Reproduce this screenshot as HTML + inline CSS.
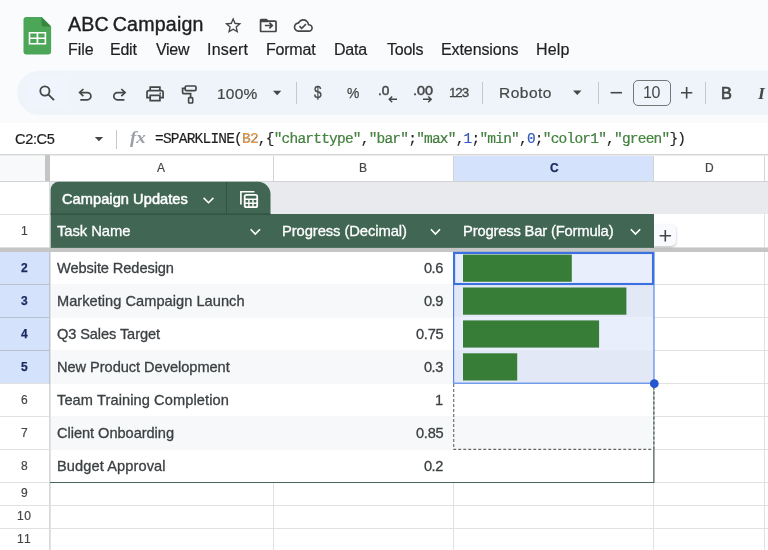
<!DOCTYPE html>
<html lang="en">
<head>
<meta charset="utf-8">
<title>ABC Campaign - Sheets</title>
<style>
*{box-sizing:border-box;margin:0;padding:0}
html,body{width:768px;height:550px;overflow:hidden;background:#f9fbfd;font-family:"Liberation Sans",sans-serif;color:#1f1f1f}
#app{position:relative;width:768px;height:550px;overflow:hidden;will-change:transform}
.b{position:absolute;display:block}
.t{position:absolute;white-space:nowrap;line-height:1}
</style>
</head>
<body>
<div id="app">
<!-- backgrounds, grid and selection -->
<svg class="b" style="left:0;top:66px" width="768" height="54" viewBox="0 66 768 54"><rect x="17.3" y="70.7" width="800" height="44.1" rx="22" fill="#eff3fa"/><rect x="27.4" y="77.2" width="40.3" height="31.1" rx="4.5" fill="#f0f4fc"/></svg>
<div class="b" style="left:296px;top:82px;width:1px;height:22px;background:#c7c7c7"></div>
<div class="b" style="left:482px;top:82px;width:1px;height:22px;background:#c7c7c7"></div>
<div class="b" style="left:598px;top:82px;width:1px;height:22px;background:#c7c7c7"></div>
<div class="b" style="left:705px;top:82px;width:1px;height:22px;background:#c7c7c7"></div>
<div class="b" style="left:633px;top:80px;width:38px;height:26px;background:transparent;border:1px solid #747775;border-radius:5px"></div>
<div class="b" style="left:0px;top:123px;width:768px;height:31px;background:#fff"></div>
<div class="b" style="left:0px;top:154px;width:768px;height:1px;background:#d6d6d6"></div>
<div class="b" style="left:0px;top:155px;width:768px;height:1px;background:#ebebeb"></div>
<div class="b" style="left:116px;top:130px;width:1px;height:19px;background:#c7c7c7"></div>
<div class="b" style="left:0px;top:156px;width:768px;height:394px;background:#fff"></div>
<div class="b" style="left:0px;top:156px;width:45px;height:25px;background:#f8f9fa"></div>
<div class="b" style="left:45px;top:155px;width:5px;height:26px;background:#c5c5c5"></div>
<div class="b" style="left:454px;top:156px;width:199px;height:25px;background:#d5e2fb"></div>
<div class="b" style="left:0px;top:181px;width:768px;height:1px;background:#d3d3d3"></div>
<div class="b" style="left:273px;top:156px;width:1px;height:25px;background:#d3d3d3"></div>
<div class="b" style="left:453px;top:156px;width:1px;height:25px;background:#d3d3d3"></div>
<div class="b" style="left:653px;top:156px;width:1px;height:25px;background:#d3d3d3"></div>
<div class="b" style="left:764px;top:156px;width:1px;height:25px;background:#d3d3d3"></div>
<div class="b" style="left:50px;top:182px;width:718px;height:32px;background:#e8eaed"></div>
<div class="b" style="left:49px;top:182px;width:1px;height:32px;background:#dcdcdc"></div>
<svg class="b" style="left:48px;top:180px" width="226" height="36" viewBox="48 180 226 36"><path d="M50.6 215V189.8a8 8 0 0 1 8-8H258a12.5 12.5 0 0 1 12.5 12.5V215Z" fill="#416754"/></svg>
<div class="b" style="left:226px;top:182px;width:1px;height:32px;background:#335443"></div>
<div class="b" style="left:0px;top:214px;width:49px;height:1px;background:#e1e1e1"></div>
<div class="b" style="left:0px;top:247px;width:768px;height:5px;background:#c5c5c5"></div>
<div class="b" style="left:0px;top:247px;width:768px;height:1px;background:#dedede"></div>
<svg class="b" style="left:48px;top:212px" width="610" height="38" viewBox="48 212 610 38"><rect x="50.6" y="214" width="603.4" height="33.9" fill="#416754"/><rect x="50.6" y="213.6" width="219.9" height="1" fill="#2c4a3a"/></svg>
<div class="b" style="left:49px;top:215px;width:1px;height:32px;background:#e1e1e1"></div>
<div class="b" style="left:654px;top:224.6px;width:21.6px;height:21.8px;background:#f8fafd;border-radius:0 5px 5px 0;box-shadow:0 1px 2.5px rgba(60,64,67,.35)"></div>
<svg class="b" style="left:657px;top:227px" width="17" height="17" viewBox="657 227 17 17"><path d="M665.3 230V241.4M659.6 235.7H671" stroke="#444746" stroke-width="1.6" fill="none"/></svg>
<div class="b" style="left:0px;top:252px;width:49px;height:32px;background:#d5e2fb"></div>
<div class="b" style="left:0px;top:284px;width:49px;height:33px;background:#d5e2fb"></div>
<div class="b" style="left:51px;top:284px;width:601px;height:34px;background:#f6f8f9"></div>
<div class="b" style="left:0px;top:317px;width:49px;height:33px;background:#d5e2fb"></div>
<div class="b" style="left:0px;top:350px;width:49px;height:33px;background:#d5e2fb"></div>
<div class="b" style="left:51px;top:350px;width:601px;height:34px;background:#f6f8f9"></div>
<div class="b" style="left:0px;top:383px;width:49px;height:33px;background:#fff"></div>
<div class="b" style="left:0px;top:416px;width:49px;height:33px;background:#fff"></div>
<div class="b" style="left:51px;top:416px;width:601px;height:34px;background:#f6f8f9"></div>
<div class="b" style="left:0px;top:449px;width:49px;height:33px;background:#fff"></div>
<div class="b" style="left:0px;top:284px;width:49px;height:1px;background:#b9c1ce"></div>
<div class="b" style="left:654px;top:284px;width:114px;height:1px;background:#e1e1e1"></div>
<div class="b" style="left:0px;top:317px;width:49px;height:1px;background:#b9c1ce"></div>
<div class="b" style="left:654px;top:317px;width:114px;height:1px;background:#e1e1e1"></div>
<div class="b" style="left:0px;top:350px;width:49px;height:1px;background:#b9c1ce"></div>
<div class="b" style="left:654px;top:350px;width:114px;height:1px;background:#e1e1e1"></div>
<div class="b" style="left:0px;top:383px;width:49px;height:1px;background:#e1e1e1"></div>
<div class="b" style="left:654px;top:383px;width:114px;height:1px;background:#e1e1e1"></div>
<div class="b" style="left:0px;top:416px;width:49px;height:1px;background:#e1e1e1"></div>
<div class="b" style="left:654px;top:416px;width:114px;height:1px;background:#e1e1e1"></div>
<div class="b" style="left:0px;top:449px;width:49px;height:1px;background:#e1e1e1"></div>
<div class="b" style="left:654px;top:449px;width:114px;height:1px;background:#e1e1e1"></div>
<div class="b" style="left:0px;top:482px;width:49px;height:1px;background:#e1e1e1"></div>
<div class="b" style="left:654px;top:482px;width:114px;height:1px;background:#e1e1e1"></div>
<div class="b" style="left:49px;top:252px;width:1px;height:298px;background:#d9d9d9"></div>
<div class="b" style="left:49px;top:252px;width:1px;height:132px;background:#bec5d1"></div>
<div class="b" style="left:50px;top:252px;width:1px;height:298px;background:#e2e2e2"></div>
<div class="b" style="left:0px;top:505px;width:768px;height:1px;background:#e1e1e1"></div>
<div class="b" style="left:0px;top:528px;width:768px;height:1px;background:#e1e1e1"></div>
<div class="b" style="left:0px;top:482px;width:49px;height:1px;background:#e1e1e1"></div>
<div class="b" style="left:273px;top:483px;width:1px;height:70px;background:#e1e1e1"></div>
<div class="b" style="left:453px;top:483px;width:1px;height:70px;background:#e1e1e1"></div>
<div class="b" style="left:653px;top:252px;width:1px;height:300px;background:#e1e1e1"></div>
<div class="b" style="left:764px;top:252px;width:1px;height:300px;background:#e1e1e1"></div>
<div class="b" style="left:764px;top:214px;width:1px;height:33px;background:#e1e1e1"></div>
<svg class="b" style="left:440px;top:246px" width="230" height="244" viewBox="440 246 230 244"><rect x="453.5" y="252" width="200.5" height="32.3" fill="#e9eefc"/><rect x="453.5" y="284.3" width="200.5" height="33.0" fill="#e2e8f5"/><rect x="453.5" y="317.3" width="200.5" height="33.0" fill="#e9eefc"/><rect x="453.5" y="350.3" width="200.5" height="33.0" fill="#e2e8f5"/><rect x="463" y="254.6" width="108.8" height="27.2" fill="#377d37"/><rect x="463" y="287.5" width="163.4" height="27.2" fill="#377d37"/><rect x="463" y="320.4" width="136.1" height="27.2" fill="#377d37"/><rect x="463" y="353.3" width="54.2" height="27.2" fill="#377d37"/><path d="M653.9 449.5V482.8" stroke="#35503f" stroke-width="1.1" fill="none"/><path d="M653.9 388V449.5" stroke="#a3b0a8" stroke-width="1.1" fill="none"/><path d="M453.7 384V449.4H653.3" fill="none" stroke="#666" stroke-width="1.1" stroke-dasharray="2.9 2.1"/><path d="M653.9 449.4V384" fill="none" stroke="#3f5247" stroke-width="1.1" stroke-dasharray="2.9 2.1"/><rect x="453.6" y="252.4" width="200.4" height="130.8" fill="none" stroke="#4a80e8" stroke-width="1.1"/><rect x="454.1" y="253" width="198.9" height="31" fill="none" stroke="#3b70e0" stroke-width="2.1"/><circle cx="654.3" cy="383.7" r="4.4" fill="#2456cf"/></svg>
<div class="b" style="left:50px;top:482px;width:604px;height:1px;background:#4a6656"></div>
<!-- icons -->
<svg class="b" style="left:23px;top:16px" width="29" height="40" viewBox="0 0 29 40"><path d="M3.4 0.9H18.6L28.1 10.6V35.6a2.9 2.9 0 0 1-2.9 2.9H3.4a2.9 2.9 0 0 1-2.9-2.9V3.8a2.9 2.9 0 0 1 2.9-2.9Z" fill="#4ba658"/><path d="M18.6 0.9L28.1 10.6H20.8a2.2 2.2 0 0 1-2.2-2.2Z" fill="#37863f"/><path d="M5.7 15.9H23.2V28.6H5.7ZM7.3 17.6V21.4H13.6V17.6ZM15.3 17.6V21.4H21.6V17.6ZM7.3 23.1V26.9H13.6V23.1ZM15.3 23.1V26.9H21.6V23.1Z" fill="#fff" fill-rule="evenodd"/></svg>
<svg class="b" style="left:223px;top:15px" width="24" height="24" viewBox="-0.24 -0.84 28.94 28.94"><path fill="#444746" d="M22 9.24l-7.19-.62L12 2 9.19 8.63 2 9.24l5.46 4.73L5.82 21 12 17.27 18.18 21l-1.63-7.03L22 9.24zM12 15.4l-3.76 2.27 1-4.28-3.32-2.88 4.38-.38L12 6.1l1.71 4.04 4.38.38-3.32 2.88 1 4.28L12 15.4z"/></svg>
<svg class="b" style="left:258px;top:15px" width="24" height="24" viewBox="0 -0.233 27.96 27.96"><path fill="#444746" d="M20 6h-8l-2-2H4c-1.1 0-2 .9-2 2v12c0 1.1.9 2 2 2h16c1.1 0 2-.9 2-2V8c0-1.1-.9-2-2-2zm0 12H4V6h5.17l2 2H20v10zm-7.41-3.41L14 16l4-4-4-4-1.41 1.41L14.17 11H8v2h6.17l-1.58 1.59z"/><path fill="#444746" d="M2.6 8.2V5.6a1.2 1.2 0 0 1 1.2-1.2h5.9l2.6 2.6v1.2z"/></svg>
<svg class="b" style="left:293px;top:15px" width="24" height="24" viewBox="-0.875 -1.125 30 30"><path fill="#444746" d="M19.35 10.04C18.67 6.59 15.64 4 12 4 9.11 4 6.6 5.64 5.35 8.04 2.34 8.36 0 10.91 0 14c0 3.31 2.69 6 6 6h13c2.76 0 5-2.24 5-5 0-2.64-2.05-4.78-4.65-4.96zM19 18H6c-2.21 0-4-1.79-4-4 0-2.05 1.53-3.76 3.56-3.97l1.07-.11.5-.95C8.08 7.14 9.94 6 12 6c2.62 0 4.88 1.86 5.39 4.43l.3 1.5 1.53.11c1.56.1 2.78 1.41 2.78 2.96 0 1.65-1.35 3-3 3zm-9-3.82l-2.09-2.09L6.5 13.5 10 17l6.01-6.01-1.41-1.41z"/></svg>
<svg class="b" style="left:36px;top:82px" width="22" height="22" viewBox="36 82 22 22"><circle cx="44.9" cy="91" r="4.6" fill="none" stroke="#444746" stroke-width="1.8"/><path d="M48.2 94.3L54 100.1" stroke="#444746" stroke-width="1.9" fill="none"/></svg>
<svg class="b" style="left:76px;top:84px" width="20" height="20" viewBox="76 84 20 20"><path d="M80.3 99.8H87.3a3.6 3.6 0 0 0 0-7.2H80" fill="none" stroke="#444746" stroke-width="1.7"/><path d="M83.4 89L79.6 92.6L83.4 96.2" fill="none" stroke="#444746" stroke-width="1.7"/></svg>
<svg class="b" style="left:110px;top:84px" width="20" height="20" viewBox="110 84 20 20"><path d="M124.4 99.8H117.4a3.6 3.6 0 0 1 0-7.2H124.7" fill="none" stroke="#444746" stroke-width="1.7"/><path d="M121.3 89L125.1 92.6L121.3 96.2" fill="none" stroke="#444746" stroke-width="1.7"/></svg>
<svg class="b" style="left:144px;top:84px" width="22" height="20" viewBox="144 84 22 20"><path d="M150.2 90.5V87.2H159.9V90.5M150.2 97.6H147V92.6a2 2 0 0 1 2-2H161.1a2 2 0 0 1 2 2V97.6H159.9M150.2 95.3H159.9V100.7H150.2Z" fill="none" stroke="#444746" stroke-width="1.7"/><circle cx="160.2" cy="93.3" r="0.9" fill="#444746"/></svg>
<svg class="b" style="left:180px;top:83px" width="20" height="22" viewBox="180 83 20 22"><rect x="185.2" y="86" width="10.8" height="4.6" rx="1.2" fill="none" stroke="#444746" stroke-width="1.7"/><path d="M185.2 88.3H182.6V92.6a1 1 0 0 0 1 1H190.6V97.6" fill="none" stroke="#444746" stroke-width="1.7"/><rect x="188.6" y="97.6" width="4.1" height="5.4" rx="0.8" fill="none" stroke="#444746" stroke-width="1.6"/></svg>
<svg class="b" style="left:271px;top:88px" width="13" height="10" viewBox="271 88 13 10"><path d="M273 90.8H281.3L277.15 95.2Z" fill="#444746"/></svg>
<svg class="b" style="left:571px;top:88px" width="13" height="10" viewBox="571 88 13 10"><path d="M573 90.6H581.5L577.25 95.1Z" fill="#444746"/></svg>
<svg class="b" style="left:92px;top:135px" width="14" height="9" viewBox="92 135 14 9"><path d="M94.8 137H103.1L98.95 141.3Z" fill="#444746"/></svg>
<svg class="b" style="left:386px;top:94px" width="14" height="10" viewBox="386 94 14 10"><path d="M397 99.3H389.2M392.2 96.4L389.2 99.3L392.2 102.2" fill="none" stroke="#444746" stroke-width="1.4"/></svg>
<svg class="b" style="left:420px;top:94px" width="14" height="10" viewBox="420 94 14 10"><path d="M423 99.3H431.2M428.2 96.4L431.2 99.3L428.2 102.2" fill="none" stroke="#444746" stroke-width="1.4"/></svg>
<svg class="b" style="left:608px;top:86px" width="16" height="14" viewBox="608 86 16 14"><path d="M610.6 92.7H622" stroke="#444746" stroke-width="1.6" fill="none"/></svg>
<svg class="b" style="left:679px;top:85px" width="16" height="16" viewBox="679 85 16 16"><path d="M681 92.7H692.3M686.65 87V98.4" stroke="#444746" stroke-width="1.6" fill="none"/></svg>
<svg class="b" style="left:200px;top:194px" width="17" height="13" viewBox="200 194 17 13"><path d="M203.6 197.9L208.50 202.7L213.4 197.9" fill="none" stroke="#fff" stroke-width="1.6"/></svg>
<svg class="b" style="left:247px;top:225px" width="17" height="13" viewBox="247 225 17 13"><path d="M250.6 229.2L255.30 234.1L260.0 229.2" fill="none" stroke="#fff" stroke-width="1.6"/></svg>
<svg class="b" style="left:427px;top:225px" width="17" height="13" viewBox="427 225 17 13"><path d="M430.9 229.2L435.45 234.1L440.0 229.2" fill="none" stroke="#fff" stroke-width="1.6"/></svg>
<svg class="b" style="left:627px;top:225px" width="17" height="13" viewBox="627 225 17 13"><path d="M630.8 229.2L635.50 234.1L640.2 229.2" fill="none" stroke="#fff" stroke-width="1.6"/></svg>
<svg class="b" style="left:238px;top:189px" width="22" height="21" viewBox="238 189 22 21"><path d="M240.9 204.6V191.7H254.4" fill="none" stroke="#fff" stroke-width="1.6"/><rect x="244.7" y="194.8" width="12.5" height="12.3" rx="1.7" fill="none" stroke="#fff" stroke-width="1.8"/><path d="M244.7 199.2H257.2M244.7 203.2H257.2M248.9 199.2V207.1M253 199.2V207.1" fill="none" stroke="#fff" stroke-width="1.4"/></svg>
<!-- text -->
<div class="t" style="left:68px;top:15px;font-size:19.6px;color:#1f1f1f;letter-spacing:0.2px;-webkit-text-stroke:0.4px #1f1f1f;word-spacing:-1.8px">ABC Campaign</div>
<div class="t" style="left:68px;top:42px;font-size:16px;color:#1f1f1f;letter-spacing:-0.03px;-webkit-text-stroke:0.2px #1f1f1f">File</div>
<div class="t" style="left:110px;top:42px;font-size:16px;color:#1f1f1f;letter-spacing:-0.23px;-webkit-text-stroke:0.2px #1f1f1f">Edit</div>
<div class="t" style="left:156px;top:42px;font-size:16px;color:#1f1f1f;letter-spacing:-0.3px;-webkit-text-stroke:0.2px #1f1f1f">View</div>
<div class="t" style="left:207px;top:42px;font-size:16px;color:#1f1f1f;letter-spacing:0.18px;-webkit-text-stroke:0.2px #1f1f1f">Insert</div>
<div class="t" style="left:266px;top:42px;font-size:16px;color:#1f1f1f;letter-spacing:-0.22px;-webkit-text-stroke:0.2px #1f1f1f">Format</div>
<div class="t" style="left:334px;top:42px;font-size:16px;color:#1f1f1f;letter-spacing:-0.2px;-webkit-text-stroke:0.2px #1f1f1f">Data</div>
<div class="t" style="left:387px;top:42px;font-size:16px;color:#1f1f1f;letter-spacing:-0.23px;-webkit-text-stroke:0.2px #1f1f1f">Tools</div>
<div class="t" style="left:441px;top:42px;font-size:16px;color:#1f1f1f;letter-spacing:-0.09px;-webkit-text-stroke:0.2px #1f1f1f">Extensions</div>
<div class="t" style="left:536px;top:42px;font-size:16px;color:#1f1f1f;letter-spacing:0.17px;-webkit-text-stroke:0.2px #1f1f1f">Help</div>
<div class="t" style="left:217px;top:86px;font-size:15.5px;color:#444746;letter-spacing:0.23px;-webkit-text-stroke:0.2px #444746">100%</div>
<div class="t" style="left:314.2px;top:85px;font-size:15.8px;color:#444746;transform:scaleX(0.861);transform-origin:0 0;-webkit-text-stroke:0.3px #444746">$</div>
<div class="t" style="left:347.2px;top:85px;font-size:15.5px;color:#444746;transform:scaleX(0.894);transform-origin:0 0;-webkit-text-stroke:0.25px #444746">%</div>
<div class="t" style="left:377.7px;top:85px;font-size:12px;color:#444746;transform:scaleX(1.136);transform-origin:0 0;-webkit-text-stroke:0.45px #444746">.0</div>
<div class="t" style="left:412.7px;top:85px;font-size:12px;color:#444746;transform:scaleX(1.195);transform-origin:0 0;-webkit-text-stroke:0.45px #444746">.00</div>
<div class="t" style="left:449px;top:86px;font-size:13.4px;color:#444746;letter-spacing:-1.13px;-webkit-text-stroke:0.3px #444746">123</div>
<div class="t" style="left:499px;top:85px;font-size:15.5px;color:#444746;letter-spacing:0.5px;-webkit-text-stroke:0.2px #444746">Roboto</div>
<div class="t" style="left:643px;top:85px;font-size:16px;color:#444746;letter-spacing:-0.5px">10</div>
<div class="t" style="left:721px;top:85px;font-size:16.3px;color:#444746;-webkit-text-stroke:0.7px #444746">B</div>
<div class="t" style="left:758px;top:85px;font-size:17.5px;color:#444746;font-weight:bold;font-style:italic;font-family:'Liberation Serif', serif">I</div>
<div class="t" style="left:15px;top:132px;font-size:14.6px;color:#1f1f1f;letter-spacing:-0.38px;-webkit-text-stroke:0.2px #1f1f1f">C2:C5</div>
<div class="t" style="left:155px;top:132px;font-size:14.5px;color:#1f1f1f;letter-spacing:-0.79px;-webkit-text-stroke:0.15px #1f1f1f;font-family:'Liberation Mono', monospace">=SPARKLINE(<span style="color:#f09a3e">B2</span>,{<span style="color:#3f8f3a">"charttype"</span>,<span style="color:#3f8f3a">"bar"</span>;<span style="color:#3f8f3a">"max"</span>,<span style="color:#2b5fd9">1</span>;<span style="color:#3f8f3a">"min"</span>,<span style="color:#2b5fd9">0</span>;<span style="color:#3f8f3a">"color1"</span>,<span style="color:#3f8f3a">"green"</span>})</div>
<div class="t" style="left:129.6px;top:129px;font-size:17.5px;color:#9aa0a6;transform:scaleX(1.086);transform-origin:0 0;font-weight:bold;font-style:italic;font-family:'Liberation Serif', serif">fx</div>
<div class="t" style="left:157px;top:162px;font-size:12px;color:#444746;-webkit-text-stroke:0.2px #444746">A</div>
<div class="t" style="left:359px;top:162px;font-size:12px;color:#444746;-webkit-text-stroke:0.2px #444746">B</div>
<div class="t" style="left:550px;top:162px;font-size:12px;color:#1a2a5f;font-weight:bold;-webkit-text-stroke:0.25px #1a2a5f">C</div>
<div class="t" style="left:705px;top:162px;font-size:12px;color:#444746;-webkit-text-stroke:0.2px #444746">D</div>
<div class="t" style="left:62px;top:192px;font-size:14.6px;color:#fff;letter-spacing:0.06px;-webkit-text-stroke:0.5px #fff">Campaign Updates</div>
<div class="t" style="left:57px;top:224px;font-size:14.8px;color:#fff;letter-spacing:-0.08px;-webkit-text-stroke:0.3px #fff">Task Name</div>
<div class="t" style="left:21px;top:225px;font-size:12px;color:#444746;-webkit-text-stroke:0.2px #444746">1</div>
<div class="t" style="left:282px;top:224px;font-size:14.8px;color:#fff;letter-spacing:-0.1px;-webkit-text-stroke:0.3px #fff">Progress (Decimal)</div>
<div class="t" style="left:463px;top:224px;font-size:14.8px;color:#fff;letter-spacing:-0.19px;-webkit-text-stroke:0.3px #fff">Progress Bar (Formula)</div>
<div class="t" style="left:57px;top:261px;font-size:14.6px;color:#3c4043;letter-spacing:-0.08px;-webkit-text-stroke:0.3px #3c4043">Website Redesign</div>
<div class="t" style="left:424px;top:261px;font-size:14.6px;color:#3c4043;letter-spacing:-0.52px;-webkit-text-stroke:0.3px #3c4043">0.6</div>
<div class="t" style="left:21px;top:262px;font-size:12px;color:#1a2a5f;font-weight:bold;-webkit-text-stroke:0.25px #1a2a5f">2</div>
<div class="t" style="left:57px;top:294px;font-size:14.6px;color:#3c4043;letter-spacing:0.04px;-webkit-text-stroke:0.3px #3c4043">Marketing Campaign Launch</div>
<div class="t" style="left:424px;top:294px;font-size:14.6px;color:#3c4043;letter-spacing:-0.52px;-webkit-text-stroke:0.3px #3c4043">0.9</div>
<div class="t" style="left:21px;top:295px;font-size:12px;color:#1a2a5f;font-weight:bold;-webkit-text-stroke:0.25px #1a2a5f">3</div>
<div class="t" style="left:57px;top:327px;font-size:14.6px;color:#3c4043;letter-spacing:-0.1px;-webkit-text-stroke:0.3px #3c4043">Q3 Sales Target</div>
<div class="t" style="left:416px;top:327px;font-size:14.6px;color:#3c4043;letter-spacing:-0.25px;-webkit-text-stroke:0.3px #3c4043">0.75</div>
<div class="t" style="left:21px;top:328px;font-size:12px;color:#1a2a5f;font-weight:bold;-webkit-text-stroke:0.25px #1a2a5f">4</div>
<div class="t" style="left:57px;top:360px;font-size:14.6px;color:#3c4043;letter-spacing:-0.04px;-webkit-text-stroke:0.3px #3c4043">New Product Development</div>
<div class="t" style="left:424px;top:360px;font-size:14.6px;color:#3c4043;letter-spacing:-0.52px;-webkit-text-stroke:0.3px #3c4043">0.3</div>
<div class="t" style="left:21px;top:361px;font-size:12px;color:#1a2a5f;font-weight:bold;-webkit-text-stroke:0.25px #1a2a5f">5</div>
<div class="t" style="left:57px;top:393px;font-size:14.6px;color:#3c4043;letter-spacing:0.1px;-webkit-text-stroke:0.3px #3c4043">Team Training Completion</div>
<div class="t" style="left:435px;top:393px;font-size:14.6px;color:#3c4043;-webkit-text-stroke:0.3px #3c4043">1</div>
<div class="t" style="left:21px;top:394px;font-size:12px;color:#444746;-webkit-text-stroke:0.2px #444746">6</div>
<div class="t" style="left:57px;top:426px;font-size:14.6px;color:#3c4043;letter-spacing:-0.04px;-webkit-text-stroke:0.3px #3c4043">Client Onboarding</div>
<div class="t" style="left:416px;top:426px;font-size:14.6px;color:#3c4043;letter-spacing:-0.25px;-webkit-text-stroke:0.3px #3c4043">0.85</div>
<div class="t" style="left:21px;top:427px;font-size:12px;color:#444746;-webkit-text-stroke:0.2px #444746">7</div>
<div class="t" style="left:57px;top:459px;font-size:14.6px;color:#3c4043;letter-spacing:0.1px;-webkit-text-stroke:0.3px #3c4043">Budget Approval</div>
<div class="t" style="left:424px;top:459px;font-size:14.6px;color:#3c4043;letter-spacing:-0.52px;-webkit-text-stroke:0.3px #3c4043">0.2</div>
<div class="t" style="left:21px;top:460px;font-size:12px;color:#444746;-webkit-text-stroke:0.2px #444746">8</div>
<div class="t" style="left:21px;top:487px;font-size:12px;color:#444746;-webkit-text-stroke:0.2px #444746">9</div>
<div class="t" style="left:17px;top:510px;font-size:12px;color:#444746;letter-spacing:0.7px;-webkit-text-stroke:0.2px #444746">10</div>
<div class="t" style="left:17px;top:533px;font-size:12px;color:#444746;letter-spacing:1.1px;-webkit-text-stroke:0.2px #444746">11</div>
</div>
</body>
</html>
